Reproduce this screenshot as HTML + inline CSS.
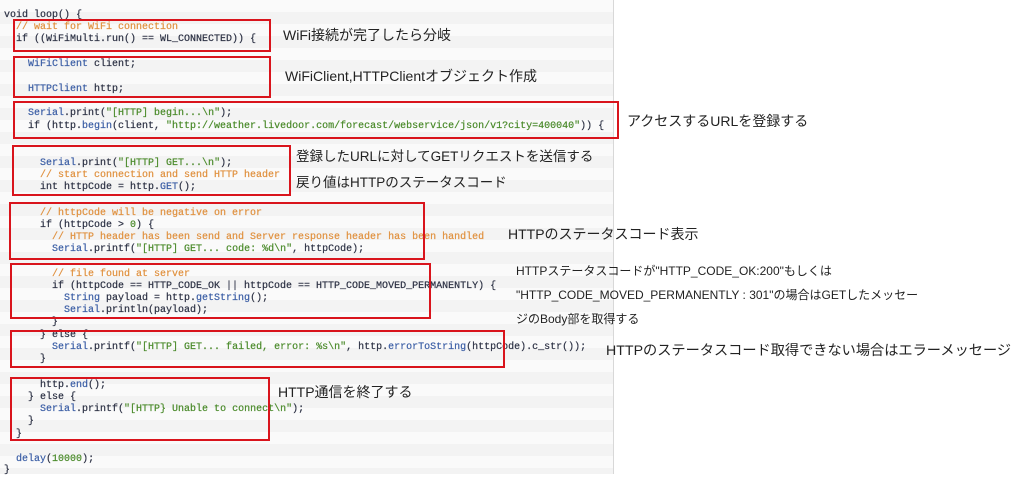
<!DOCTYPE html><html><head><meta charset="utf-8"><style>
body{margin:0;width:1024px;height:474px;background:#fff;position:relative;overflow:hidden;font-family:"Liberation Sans","Noto Sans CJK JP",sans-serif}
.code{position:absolute;left:0;top:0;width:613px;height:474px;background:repeating-linear-gradient(#fafafa 0 12px,#f3f3f3 12px 24px);border-right:1px solid #d8d8d8}
.w{position:absolute;left:0;top:3px}
.l{position:absolute;left:4px;font:10px/12px "Liberation Mono",monospace;color:#2c3144;white-space:pre;-webkit-text-stroke:0.2px}
.c{color:#e0913f}.s{color:#4a8a2a}.k{color:#3b5ea5}
.b{position:absolute;border:2px solid #d9141c;box-sizing:border-box}
.t{position:absolute;color:#222;font-size:14px;white-space:nowrap;line-height:16px}
.sm{font-size:12px}
</style></head><body>
<div class="code"></div>
<div class="w">
<div class="l" style="top:7px">void loop() {</div>
<div class="l" style="top:19px"><span class="c">  // wait for WiFi connection</span></div>
<div class="l" style="top:31px">  if ((WiFiMulti.run() == WL_CONNECTED)) {</div>
<div class="l" style="top:56px">    <span class="k">WiFiClient</span> client;</div>
<div class="l" style="top:81px">    <span class="k">HTTPClient</span> http;</div>
<div class="l" style="top:105px">    <span class="k">Serial</span>.print(<span class="s">"[HTTP] begin...\n"</span>);</div>
<div class="l" style="top:118px">    if (http.<span class="k">begin</span>(client, <span class="s">"http://weather.livedoor.com/forecast/webservice/json/v1?city=400040"</span>)) {</div>
<div class="l" style="top:155px">      <span class="k">Serial</span>.print(<span class="s">"[HTTP] GET...\n"</span>);</div>
<div class="l" style="top:167px"><span class="c">      // start connection and send HTTP header</span></div>
<div class="l" style="top:179px">      int httpCode = http.<span class="k">GET</span>();</div>
<div class="l" style="top:205px"><span class="c">      // httpCode will be negative on error</span></div>
<div class="l" style="top:217px">      if (httpCode &gt; <span class="s">0</span>) {</div>
<div class="l" style="top:229px"><span class="c">        // HTTP header has been send and Server response header has been handled</span></div>
<div class="l" style="top:241px">        <span class="k">Serial</span>.printf(<span class="s">"[HTTP] GET... code: %d\n"</span>, httpCode);</div>
<div class="l" style="top:266px"><span class="c">        // file found at server</span></div>
<div class="l" style="top:278px">        if (httpCode == HTTP_CODE_OK || httpCode == HTTP_CODE_MOVED_PERMANENTLY) {</div>
<div class="l" style="top:290px">          <span class="k">String</span> payload = http.<span class="k">getString</span>();</div>
<div class="l" style="top:302px">          <span class="k">Serial</span>.println(payload);</div>
<div class="l" style="top:314px">        }</div>
<div class="l" style="top:327px">      } else {</div>
<div class="l" style="top:339px">        <span class="k">Serial</span>.printf(<span class="s">"[HTTP] GET... failed, error: %s\n"</span>, http.<span class="k">errorToString</span>(httpCode).c_str());</div>
<div class="l" style="top:351px">      }</div>
<div class="l" style="top:377px">      http.<span class="k">end</span>();</div>
<div class="l" style="top:389px">    } else {</div>
<div class="l" style="top:401px">      <span class="k">Serial</span>.printf(<span class="s">"[HTTP} Unable to connect\n"</span>);</div>
<div class="l" style="top:413px">    }</div>
<div class="l" style="top:426px">  }</div>
<div class="l" style="top:451px">  <span class="k">delay</span>(<span class="s">10000</span>);</div>
<div class="l" style="top:462px">}</div>
</div>

<div class="b" style="left:13px;top:19px;width:258px;height:33px"></div>
<div class="b" style="left:13px;top:56px;width:258px;height:42px"></div>
<div class="b" style="left:13px;top:101px;width:606px;height:38px"></div>
<div class="b" style="left:12px;top:145px;width:279px;height:51px"></div>
<div class="b" style="left:9px;top:202px;width:416px;height:58px"></div>
<div class="b" style="left:10px;top:263px;width:421px;height:56px"></div>
<div class="b" style="left:10px;top:330px;width:495px;height:38px"></div>
<div class="b" style="left:10px;top:377px;width:260px;height:64px"></div>

<div class="t" style="left:283px;top:27px">WiFi接続が完了したら分岐</div>
<div class="t" style="left:285px;top:68px">WiFiClient,HTTPClientオブジェクト作成</div>
<div class="t" style="left:627px;top:113px">アクセスするURLを登録する</div>
<div class="t" style="left:296px;top:149px;font-size:13.5px">登録したURLに対してGETリクエストを送信する</div>
<div class="t" style="left:296px;top:175px;font-size:13.5px">戻り値はHTTPのステータスコード</div>
<div class="t" style="left:508px;top:226px">HTTPのステータスコード表示</div>
<div class="t sm" style="left:516px;top:263px">HTTPステータスコードが"HTTP_CODE_OK:200"もしくは</div>
<div class="t sm" style="left:516px;top:287px">"HTTP_CODE_MOVED_PERMANENTLY : 301"の場合はGETしたメッセー</div>
<div class="t sm" style="left:516px;top:311px">ジのBody部を取得する</div>
<div class="t" style="left:606px;top:343px;font-size:14.2px">HTTPのステータスコード取得できない場合はエラーメッセージ</div>
<div class="t" style="left:278px;top:384px">HTTP通信を終了する</div>
</body></html>
